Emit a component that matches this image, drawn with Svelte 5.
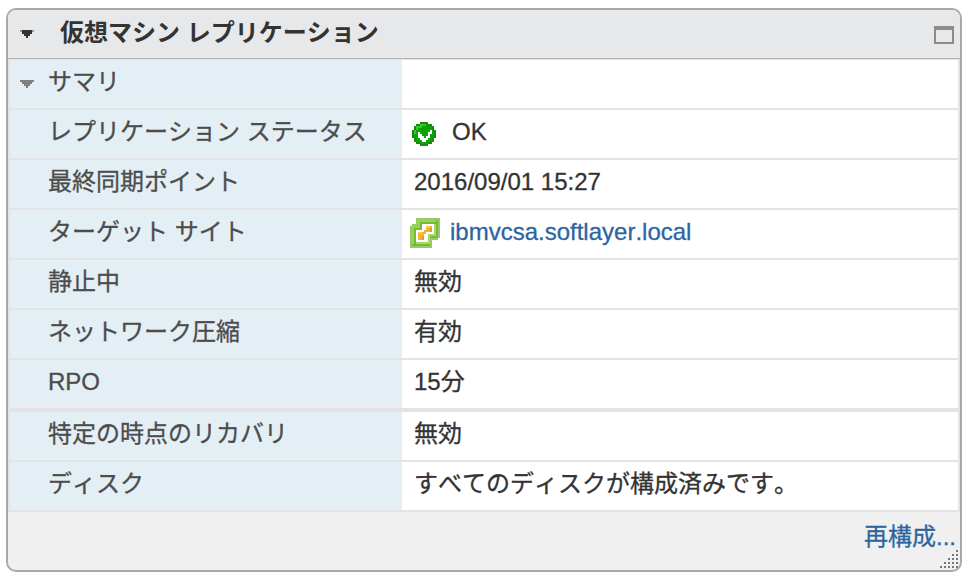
<script>
  let expanded = true

  const rows = [
    { label: 'レプリケーション ステータス', value: 'OK', icon: 'ok' },
    { label: '最終同期ポイント', value: '2016/09/01 15:27' },
    { label: 'ターゲット サイト', value: 'ibmvcsa.softlayer.local', icon: 'site' },
    { label: '静止中', value: '無効' },
    { label: 'ネットワーク圧縮', value: '有効' },
    { label: 'RPO', value: '15分', last: true },
    { label: '特定の時点のリカバリ', value: '無効' },
    { label: 'ディスク', value: 'すべてのディスクが構成済みです。' }
  ]
</script>

<div class="panel">
  <div class="header">
    <svg class="arrow" width="14" height="8" viewBox="0 0 14 8" shape-rendering="crispEdges">
      <path fill="#999" d="M0 0h14v2H0z" />
      <path fill="#333" d="M2 0h10v4h-2v2H8v2H6V6H4V4H2z" />
    </svg>
    <h1>仮想マシン レプリケーション</h1>
    <svg class="maximize" width="20" height="18" viewBox="0 0 20 18" shape-rendering="crispEdges">
      <path fill="#8c8c8c" fill-rule="evenodd" d="M0 0h20v18H0zM2 4v12h16V4z" />
    </svg>
  </div>

  <div class="table">
    <div class="row">
      <div class="label">
        <button class="toggle" aria-label="サマリ" on:click={() => (expanded = !expanded)}>
          <svg width="14" height="8" viewBox="0 0 14 8" shape-rendering="crispEdges">
            <path fill="#808080" d="M0 0h14v2h-2v2h-2v2H8v2H6V6H4V4H2V2H0z" />
          </svg>
        </button>
        サマリ
      </div>
      <div class="value"></div>
    </div>

    {#if expanded}
      {#each rows as row}
        <div class="row" class:last={row.last}>
          <div class="label">{row.label}</div>
          <div class="value {row.icon || ''}">
            {#if row.icon === 'ok'}
              <svg width="24" height="24" viewBox="0 0 12 12" shape-rendering="crispEdges">
                <path fill="#168a12" d="M4 0h4v1h2v1h1v2h1v4h-1v2h-1v1H8v1H4v-1H2v-1H1V8H0V4h1V2h1V1h2z" />
                <path fill="#0aa406" d="M4 1h4v1h2v2h1v4h-1v2H8v1H4v-1H2V8H1V4h1V2h2z" />
                <path fill="#3cc435" d="M4 1h3v1H5v1H3v1H2v2H1V4h1V2h2z" />
                <path fill="#fff" d="M9 4h1v2H9v2H8v1H7v1H5V9H4V8H3V5h1v1h1v1h1v1h1V7h1V5h1z" />
              </svg>
              <span>{row.value}</span>
            {:else if row.icon === 'site'}
              <svg width="30" height="30" viewBox="0 0 15 15" shape-rendering="crispEdges">
                <path fill="#9bc96a" d="M3 0h12v10h-1v1h-3v4H0V4h1V3h2z" />
                <path fill="#76bb35" d="M4 1h10v9h-4v4H1V4h3z" />
                <path fill="#97d653" d="M4 1h9v1H5v3H2v8H1V4h3z" />
                <path fill="#a5db6c" d="M12 3h1v6h-3v4H3v-1h6V8h3z" />
                <path fill="#fff" d="M6 3h6v5H9v4H3V6h3z" />
                <path fill="#f2b233" d="M8 4h3v3H8zM4 7h4v1H7v3H4zM7 6h1v1H7z" />
                <path fill="#fbc64a" d="M8 4h2v1H8zM4 7h2v1H4z" />
                <path fill="#e79a24" d="M10 5h1v2h-1zM6 9h1v2H6z" />
              </svg>
              <a href="#site">{row.value}</a>
            {:else}
              {row.value}
            {/if}
          </div>
        </div>
      {/each}
    {/if}
  </div>

  <div class="footer">
    <a href="#reconfigure">再構成...</a>
    <svg class="grip" width="18" height="18" viewBox="0 0 18 18" shape-rendering="crispEdges">
      {#each [0, 1, 2, 3, 4] as r}
        {#each [0, 1, 2, 3, 4] as c}
          {#if r + c >= 4}
            <rect x={c * 4} y={r * 4} width="2" height="2" fill="#777" />
          {/if}
        {/each}
      {/each}
    </svg>
  </div>
</div>

<style>
  :global(body) {
    margin: 0;
    background: #fff;
    font-family: 'Liberation Sans', 'Noto Sans CJK JP', sans-serif;
    font-size: 24px;
    font-kerning: none;
    color: #333;
  }

  .panel {
    box-sizing: border-box;
    width: 956px;
    height: 564px;
    margin: 8px 0 0 6px;
    border: 2px solid #a9a9a9;
    border-radius: 10px;
    background: #f0f0f0;
    overflow: hidden;
    position: relative;
  }

  .header {
    box-sizing: border-box;
    height: 49px;
    padding: 0 6px 0 12px;
    display: flex;
    align-items: center;
    background: #e7e8ea;
    border-bottom: 1px solid #b3b3b3;
  }

  .arrow {
    margin-right: 26px;
  }

  h1 {
    margin: 0;
    flex: 1;
    font-size: 24px;
    line-height: 36px;
    padding-bottom: 2px;
    font-weight: bold;
  }

  .maximize {
    margin-top: 2px;
  }

  .table {
    border: 2px solid #e3e3e3;
    border-top-width: 1px;
    border-bottom: none;
  }

  .row {
    display: flex;
    height: 48px;
    line-height: 44px;
    border-bottom: 2px solid #e3e3e3;
    white-space: nowrap;
    -webkit-text-stroke: 0.3px;
  }

  .row.last {
    border-bottom-width: 4px;
  }

  .label {
    box-sizing: border-box;
    width: 392px;
    padding-left: 38px;
    background: #e4eff5;
    color: #4c4c4c;
    display: flex;
  }

  .toggle {
    width: 28px;
    height: 48px;
    margin-left: -28px;
    padding: 0;
    border: none;
    background: none;
    display: flex;
    align-items: center;
  }

  .value {
    flex: 1;
    padding-left: 12px;
    background: #fff;
    display: flex;
  }

  .value.ok {
    padding-left: 10px;
    gap: 16px;
  }

  .value.ok svg {
    margin-top: 12px;
  }

  .value.site {
    padding-left: 8px;
    gap: 10px;
  }

  .value.site svg {
    margin-top: 8px;
  }

  a {
    color: #2d659f;
    text-decoration: none;
  }

  .footer {
    display: flex;
    justify-content: flex-end;
    padding-right: 4px;
    line-height: 50px;
    -webkit-text-stroke: 0.3px;
  }

  .grip {
    position: absolute;
    right: 2px;
    bottom: 2px;
  }
</style>
